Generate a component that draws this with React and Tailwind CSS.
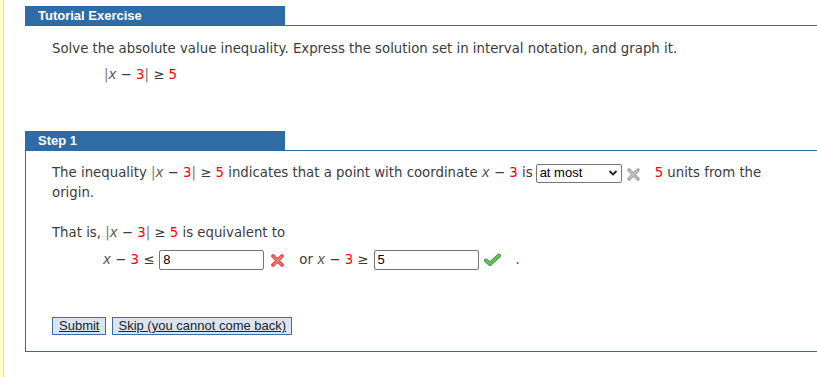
import React from 'react';

const Red = ({ children }) => <span className="text-[#ff0000]">{children}</span>;

// |x − 3| style math snippet
const AbsExpr = () => (
  <span>
    <span className="text-[#777]">|</span>
    <span className="italic text-[#555]">x</span> − <Red>3</Red>
    <span className="text-[#777]">|</span> ≥ <Red>5</Red>
  </span>
);

const GrayX = () => (
  <svg width="15" height="15" viewBox="0 0 15 15" className="inline-block">
    <path d="M3 3 L12 12 M12 3 L3 12" stroke="#a8a8a8" strokeWidth="3.6" strokeLinecap="round" />
    <path d="M3.5 3.5 L11.5 11.5 M11.5 3.5 L3.5 11.5" stroke="#c4c4c4" strokeWidth="1.2" strokeLinecap="round" />
  </svg>
);

const RedX = () => (
  <svg width="15" height="15" viewBox="0 0 15 15" className="inline-block">
    <path d="M3 3 L12 12 M12 3 L3 12" stroke="#f04848" strokeWidth="3.8" strokeLinecap="round" />
    <path d="M3.5 3.5 L11.5 11.5 M11.5 3.5 L3.5 11.5" stroke="#ff8080" strokeWidth="1.2" strokeLinecap="round" />
  </svg>
);

const Check = () => (
  <svg width="17" height="14" viewBox="0 0 17 14" className="inline-block">
    <path d="M2 7.5 L6 11 L15 2.5" fill="none" stroke="#3f8f3a" strokeWidth="4" strokeLinecap="round" strokeLinejoin="round" />
    <path d="M2 7.5 L6 11 L15 2.5" fill="none" stroke="#6cc064" strokeWidth="2.4" strokeLinecap="round" strokeLinejoin="round" />
  </svg>
);

const SectionBar = ({ title }) => (
  <div className="border-b border-[#2e6ca8]">
    <div className="w-[260px] h-[19px] bg-[#2e6ca8] pl-[13px] text-white font-bold text-[13px] leading-[19px] font-['Liberation_Sans',Arial,sans-serif]">
      {title}
    </div>
  </div>
);

const Field = ({ value }) => (
  <div className="w-[105px] h-[20px] border border-[#767676] rounded-[2px] px-[3px] text-[13px] leading-[18px] text-black font-['Liberation_Sans',Arial,sans-serif]">
    {value}
  </div>
);

export default function App() {
  return (
    <div className="flex min-h-screen bg-white overflow-hidden">
      <div className="w-[4px] shrink-0 bg-[#fffcc8] border-r border-[#e4dfa8]" />
      <div className="flex-1 ml-[21px] pt-[6px] text-[13.3px] leading-[20px] text-[#3c3c3c] font-['DejaVu_Sans','Liberation_Sans',sans-serif]">
        <SectionBar title="Tutorial Exercise" />
        <div className="pl-[27px] pt-[13px]">
          <p>Solve the absolute value inequality. Express the solution set in interval notation, and graph it.</p>
          <p className="pl-[52px] pt-[6px]"><AbsExpr /></p>
        </div>

        <div className="mt-[46px]">
          <SectionBar title="Step 1" />
          <div className="border-l border-b border-[#2e6ca8] pl-[26px] pt-[12px] pb-[16px]">
            <div className="flex items-center whitespace-nowrap">
              <span>The inequality <AbsExpr /> indicates that a point with coordinate <span className="italic text-[#555]">x</span> − <Red>3</Red> is</span>
              <div className="ml-[3px] w-[86px] h-[19px] border border-[#767676] rounded-[2px] flex items-center justify-between pl-[3px] pr-[3px] text-[13px] text-black font-['Liberation_Sans',Arial,sans-serif]">
                <span>at most</span>
                <svg width="10" height="8" viewBox="0 0 10 8">
                  <path d="M1.5 2 L5 5.5 L8.5 2" fill="none" stroke="#222" strokeWidth="1.8" />
                </svg>
              </div>
              <span className="ml-[4px] mt-[3px] flex"><GrayX /></span>
              <span className="ml-[14px]"><Red>5</Red> units from the</span>
            </div>
            <p>origin.</p>

            <p className="mt-[20px]">That is, <AbsExpr /> is equivalent to</p>
            <div className="flex items-center mt-[7px] pl-[51px] whitespace-nowrap">
              <span className="mr-[5px]"><span className="italic text-[#555]">x</span> − <Red>3</Red> ≤</span>
              <Field value="8" />
              <span className="ml-[6px] flex"><RedX /></span>
              <span className="ml-[14px] mr-[5px]">or <span className="italic text-[#555]">x</span> − <Red>3</Red> ≥</span>
              <Field value="5" />
              <span className="ml-[5px] flex"><Check /></span>
              <span className="ml-[15px]">.</span>
            </div>

            <div className="flex gap-[6px] mt-[47px] font-['Liberation_Sans',Arial,sans-serif] text-[13px] text-[#222]">
              <button className="h-[18px] px-[6px] leading-[16px] bg-[#dbe5f1] border border-[#3a6ea5] underline">Submit</button>
              <button className="h-[18px] px-[5px] leading-[16px] bg-[#dbe5f1] border border-[#3a6ea5] underline">Skip (you cannot come back)</button>
            </div>
          </div>
        </div>
      </div>
    </div>
  );
}
